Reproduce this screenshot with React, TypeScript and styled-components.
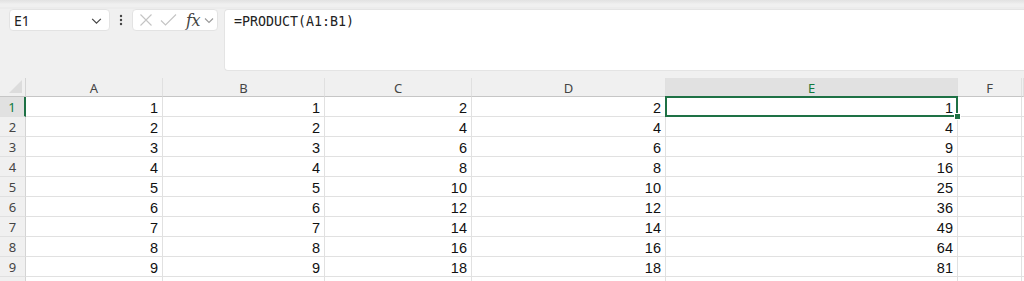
import React from "react";
import styled, { createGlobalStyle } from "styled-components";

const Global = createGlobalStyle`
  html, body { margin: 0; padding: 0; background: #f0f0f0; }
  body { font-family: "Liberation Sans", Arial, sans-serif; }
`;

const Page = styled.div`
  width: 1024px;
  height: 281px;
  overflow: hidden;
  background: #f0f0f0;
  display: flex;
  flex-direction: column;
`;

const TopShade = styled.div`
  height: 9px;
  background: linear-gradient(#e2e2e2 0px, #ebebeb 3px, #f0f0f0 4px, #f0f0f0 7px, #e8e8e8 8px, #f0f0f0 9px);
  flex: none;
`;

const FormulaRow = styled.div`
  display: flex;
  align-items: flex-start;
  padding-left: 9px;
  height: 62px;
  flex: none;
`;

const NameBox = styled.div`
  width: 101px;
  height: 22px;
  box-sizing: border-box;
  background: #fff;
  border: 1px solid #e3e3e3;
  border-radius: 4px;
  display: flex;
  align-items: center;
  justify-content: space-between;
  padding: 0 6px 0 4px;
  font-family: "Noto Sans", "Open Sans", sans-serif;
  font-size: 14px;
  color: #222;
`;

const Dots = styled.div`
  width: 22px;
  height: 22px;
  display: flex;
  align-items: center;
  justify-content: center;
`;

const FxBox = styled.div`
  width: 86px;
  height: 22px;
  box-sizing: border-box;
  background: #fff;
  border: 1px solid #e3e3e3;
  border-radius: 4px;
  display: flex;
  align-items: center;
  padding-left: 6px;
  gap: 7px;
`;

const Fx = styled.span`
  font-family: "DejaVu Serif", "Liberation Serif", serif;
  font-style: italic;
  font-size: 16px;
  color: #444;
  margin-left: 2px;
  margin-right: -4px;
  letter-spacing: -0.5px;
`;

const FormulaInput = styled.div`
  margin-left: 6px;
  flex: 1;
  height: 62px;
  box-sizing: border-box;
  background: #fff;
  border: 1px solid #e4e4e4;
  border-right: none;
  border-radius: 4px 0 0 4px;
  padding: 3px 0 0 9px;
  font-family: "DejaVu Sans Mono", "Liberation Mono", monospace;
  font-size: 13.3px;
  line-height: 18px;
  color: #222;
`;

const Gap = styled.div`
  height: 7px;
  flex: none;
`;

const COLS = [26, 137, 162, 147, 194, 292, 64, 2];

const Grid = styled.div`
  display: grid;
  grid-template-columns: ${COLS.map((c) => c + "px").join(" ")};
  grid-auto-rows: 20px;
  grid-template-rows: 19px;
  background: #fff;
`;

const Corner = styled.div`
  background: #f0f0f0;
  border-right: 1px solid #d4d4d4;
  border-bottom: 1px solid #c6c6c6;
  box-sizing: border-box;
  position: relative;
  &::after {
    content: "";
    position: absolute;
    right: 3px;
    bottom: 3px;
    width: 0;
    height: 0;
    border-left: 13px solid transparent;
    border-bottom: 13px solid #dcdcdc;
  }
`;

const ColHead = styled.div<{ $active?: boolean }>`
  background: ${(p) => (p.$active ? "#e1e1e1" : "#f0f0f0")};
  color: ${(p) => (p.$active ? "#117a3e" : "#444")};
  border-right: 1px solid #e0e0e0;
  border-bottom: 1px solid #c6c6c6;
  box-sizing: border-box;
  display: flex;
  align-items: center;
  justify-content: center;
  font-family: "Noto Sans", "Open Sans", sans-serif;
  font-size: 13px;
  padding-top: 1px;
`;

const RowHead = styled.div<{ $active?: boolean }>`
  background: ${(p) => (p.$active ? "#e1e1e1" : "#f0f0f0")};
  color: ${(p) => (p.$active ? "#117a3e" : "#444")};
  border-right: ${(p) => (p.$active ? "2px solid #1e7145" : "1px solid #d4d4d4")};
  border-bottom: 1px solid #e0e0e0;
  box-sizing: border-box;
  display: flex;
  align-items: center;
  justify-content: center;
  font-family: "Noto Sans", "Open Sans", sans-serif;
  font-size: 13px;
`;

const Cell = styled.div`
  position: relative;
  border-right: 1px solid #e1e1e1;
  border-bottom: 1px solid #e1e1e1;
  box-sizing: border-box;
  display: flex;
  align-items: center;
  justify-content: flex-end;
  padding: 2px 4px 0 0;
  font-family: "Liberation Sans", Arial, sans-serif;
  font-size: 14.5px;
  color: #111;
`;

const Selection = styled.div`
  position: absolute;
  left: -1px;
  top: -1px;
  right: -1px;
  bottom: -1px;
  border: 2px solid #1e7145;
  pointer-events: none;
`;

const Handle = styled.div`
  position: absolute;
  right: -4px;
  bottom: -4px;
  width: 5px;
  height: 5px;
  background: #1e7145;
  border: 1px solid #fff;
  z-index: 2;
`;

const Chevron = ({ color = "#555", size = 12 }: { color?: string; size?: number }) => (
  <svg width={size} height={size} viewBox="0 0 12 12">
    <path d="M2 4.5 L6 8.5 L10 4.5" fill="none" stroke={color} strokeWidth="1.1" />
  </svg>
);

const headers = ["A", "B", "C", "D", "E", "F"];

export default function App() {
  const rows = Array.from({ length: 10 }, (_, i) => i + 1);
  return (
    <Page>
      <Global />
      <TopShade />
      <FormulaRow>
        <NameBox>
          <span>E1</span>
          <Chevron color="#444" size={13} />
        </NameBox>
        <Dots>
          <svg width="4" height="12" viewBox="0 0 4 12">
            <circle cx="2" cy="2" r="1.2" fill="#444" />
            <circle cx="2" cy="6" r="1.2" fill="#444" />
            <circle cx="2" cy="10" r="1.2" fill="#444" />
          </svg>
        </Dots>
        <FxBox>
          <svg width="14" height="14" viewBox="0 0 14 14">
            <path d="M1.5 1.5 L12.5 12.5 M12.5 1.5 L1.5 12.5" stroke="#c4c4c4" strokeWidth="1.1" fill="none" />
          </svg>
          <svg width="17" height="14" viewBox="0 0 17 14">
            <path d="M1 7.5 L5.5 12 L16 1.5" stroke="#c4c4c4" strokeWidth="1.1" fill="none" />
          </svg>
          <Fx>fx</Fx>
          <Chevron color="#9a9a9a" size={12} />
        </FxBox>
        <FormulaInput>=PRODUCT(A1:B1)</FormulaInput>
      </FormulaRow>
      <Gap />
      <Grid>
        <Corner />
        {headers.map((h) => (
          <ColHead key={h} $active={h === "E"}>
            {h}
          </ColHead>
        ))}
        <ColHead />
        {rows.map((r) => {
          const filled = r <= 9;
          const vals = filled ? [r, r, 2 * r, 2 * r, r * r] : [null, null, null, null, null];
          return (
            <React.Fragment key={r}>
              <RowHead $active={r === 1}>{filled ? r : null}</RowHead>
              {vals.map((v, i) => (
                <Cell key={i}>
                  {v}
                  {r === 1 && i === 4 && (
                    <>
                      <Selection />
                      <Handle />
                    </>
                  )}
                </Cell>
              ))}
              <Cell />
              <Cell />
            </React.Fragment>
          );
        })}
      </Grid>
    </Page>
  );
}
